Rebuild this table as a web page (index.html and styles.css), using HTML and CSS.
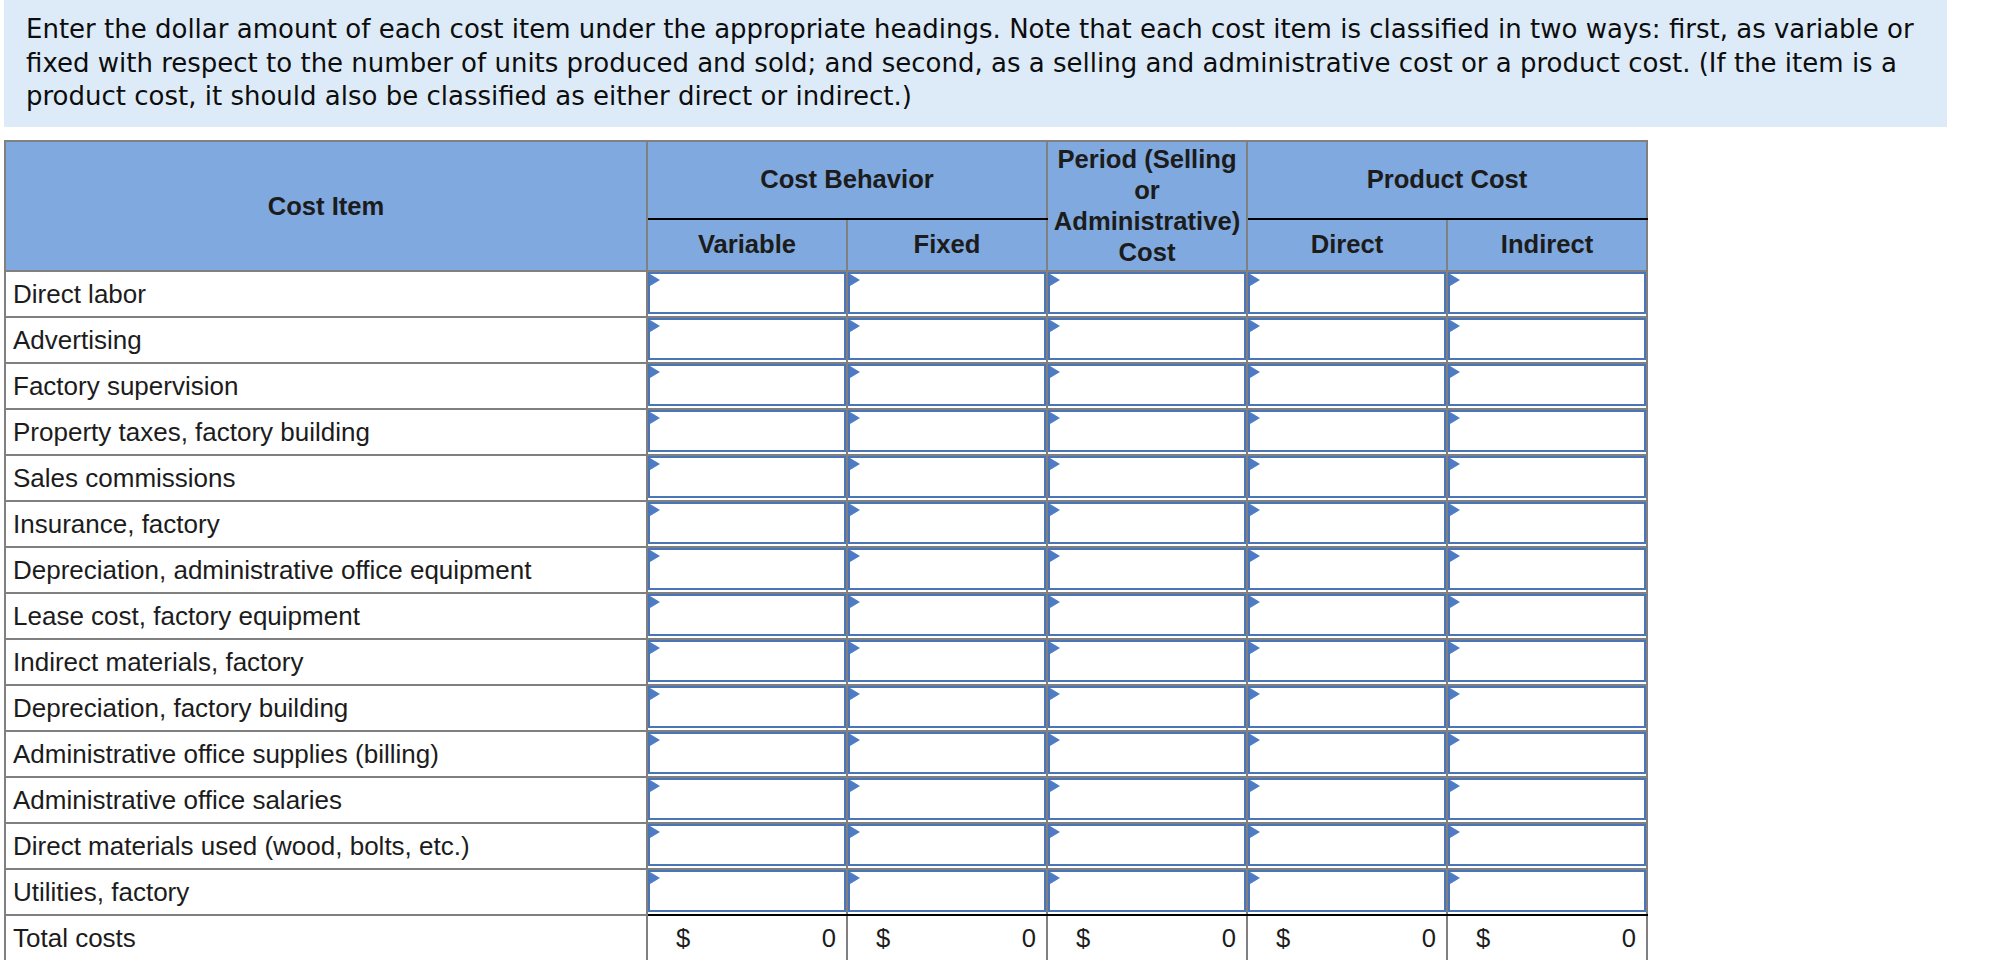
FILE: index.html
```html
<!DOCTYPE html>
<html lang="en">
<head>
<meta charset="utf-8">
<title>Cost classification</title>
<link rel="stylesheet" href="styles.css">
</head>
<body>
<div class="page">
  <div class="prompt">
    <p>Enter the dollar amount of each cost item under the appropriate headings. Note that each cost item is classified in two ways: first, as variable or fixed with respect to the number of units produced and sold; and second, as a selling and administrative cost or a product cost. (If the item is a product cost, it should also be classified as either direct or indirect.)</p>
  </div>

  <table class="grid">
    <colgroup>
      <col class="c-item">
      <col class="c-val"><col class="c-val"><col class="c-val"><col class="c-val"><col class="c-val">
    </colgroup>
    <thead>
      <tr class="h1">
        <th rowspan="2" class="item-h">Cost Item</th>
        <th colspan="2" class="group">Cost Behavior</th>
        <th rowspan="2" class="period">Period (Selling or Administrative) Cost</th>
        <th colspan="2" class="group">Product Cost</th>
      </tr>
      <tr class="h2">
        <th class="sub">Variable</th>
        <th class="sub">Fixed</th>
        <th class="sub">Direct</th>
        <th class="sub">Indirect</th>
      </tr>
    </thead>
    <tbody>
      <tr><td class="label">Direct labor</td><td class="cell"><div class="field"><input type="text"></div></td><td class="cell"><div class="field"><input type="text"></div></td><td class="cell"><div class="field"><input type="text"></div></td><td class="cell"><div class="field"><input type="text"></div></td><td class="cell"><div class="field"><input type="text"></div></td></tr>
      <tr><td class="label">Advertising</td><td class="cell"><div class="field"><input type="text"></div></td><td class="cell"><div class="field"><input type="text"></div></td><td class="cell"><div class="field"><input type="text"></div></td><td class="cell"><div class="field"><input type="text"></div></td><td class="cell"><div class="field"><input type="text"></div></td></tr>
      <tr><td class="label">Factory supervision</td><td class="cell"><div class="field"><input type="text"></div></td><td class="cell"><div class="field"><input type="text"></div></td><td class="cell"><div class="field"><input type="text"></div></td><td class="cell"><div class="field"><input type="text"></div></td><td class="cell"><div class="field"><input type="text"></div></td></tr>
      <tr><td class="label">Property taxes, factory building</td><td class="cell"><div class="field"><input type="text"></div></td><td class="cell"><div class="field"><input type="text"></div></td><td class="cell"><div class="field"><input type="text"></div></td><td class="cell"><div class="field"><input type="text"></div></td><td class="cell"><div class="field"><input type="text"></div></td></tr>
      <tr><td class="label">Sales commissions</td><td class="cell"><div class="field"><input type="text"></div></td><td class="cell"><div class="field"><input type="text"></div></td><td class="cell"><div class="field"><input type="text"></div></td><td class="cell"><div class="field"><input type="text"></div></td><td class="cell"><div class="field"><input type="text"></div></td></tr>
      <tr><td class="label">Insurance, factory</td><td class="cell"><div class="field"><input type="text"></div></td><td class="cell"><div class="field"><input type="text"></div></td><td class="cell"><div class="field"><input type="text"></div></td><td class="cell"><div class="field"><input type="text"></div></td><td class="cell"><div class="field"><input type="text"></div></td></tr>
      <tr><td class="label">Depreciation, administrative office equipment</td><td class="cell"><div class="field"><input type="text"></div></td><td class="cell"><div class="field"><input type="text"></div></td><td class="cell"><div class="field"><input type="text"></div></td><td class="cell"><div class="field"><input type="text"></div></td><td class="cell"><div class="field"><input type="text"></div></td></tr>
      <tr><td class="label">Lease cost, factory equipment</td><td class="cell"><div class="field"><input type="text"></div></td><td class="cell"><div class="field"><input type="text"></div></td><td class="cell"><div class="field"><input type="text"></div></td><td class="cell"><div class="field"><input type="text"></div></td><td class="cell"><div class="field"><input type="text"></div></td></tr>
      <tr><td class="label">Indirect materials, factory</td><td class="cell"><div class="field"><input type="text"></div></td><td class="cell"><div class="field"><input type="text"></div></td><td class="cell"><div class="field"><input type="text"></div></td><td class="cell"><div class="field"><input type="text"></div></td><td class="cell"><div class="field"><input type="text"></div></td></tr>
      <tr><td class="label">Depreciation, factory building</td><td class="cell"><div class="field"><input type="text"></div></td><td class="cell"><div class="field"><input type="text"></div></td><td class="cell"><div class="field"><input type="text"></div></td><td class="cell"><div class="field"><input type="text"></div></td><td class="cell"><div class="field"><input type="text"></div></td></tr>
      <tr><td class="label">Administrative office supplies (billing)</td><td class="cell"><div class="field"><input type="text"></div></td><td class="cell"><div class="field"><input type="text"></div></td><td class="cell"><div class="field"><input type="text"></div></td><td class="cell"><div class="field"><input type="text"></div></td><td class="cell"><div class="field"><input type="text"></div></td></tr>
      <tr><td class="label">Administrative office salaries</td><td class="cell"><div class="field"><input type="text"></div></td><td class="cell"><div class="field"><input type="text"></div></td><td class="cell"><div class="field"><input type="text"></div></td><td class="cell"><div class="field"><input type="text"></div></td><td class="cell"><div class="field"><input type="text"></div></td></tr>
      <tr><td class="label">Direct materials used (wood, bolts, etc.)</td><td class="cell"><div class="field"><input type="text"></div></td><td class="cell"><div class="field"><input type="text"></div></td><td class="cell"><div class="field"><input type="text"></div></td><td class="cell"><div class="field"><input type="text"></div></td><td class="cell"><div class="field"><input type="text"></div></td></tr>
      <tr class="last"><td class="label">Utilities, factory</td><td class="cell"><div class="field"><input type="text"></div></td><td class="cell"><div class="field"><input type="text"></div></td><td class="cell"><div class="field"><input type="text"></div></td><td class="cell"><div class="field"><input type="text"></div></td><td class="cell"><div class="field"><input type="text"></div></td></tr>
      <tr class="total">
        <td class="label">Total costs</td>
        <td class="sum"><div class="amt"><span>$</span><span>0</span></div></td>
        <td class="sum"><div class="amt"><span>$</span><span>0</span></div></td>
        <td class="sum"><div class="amt"><span>$</span><span>0</span></div></td>
        <td class="sum"><div class="amt"><span>$</span><span>0</span></div></td>
        <td class="sum"><div class="amt"><span>$</span><span>0</span></div></td>
      </tr>
    </tbody>
  </table>
</div>
</body>
</html>
```

FILE: styles.css
```css
html, body {
  margin: 0;
  padding: 0;
  background: #ffffff;
}

.page {
  padding: 0 0 0 4px;
}

.prompt {
  width: 1943px;
  box-sizing: border-box;
  background: #ddebf8;
  padding: 13px 22px 13px 22px;
  font-family: Verdana, "DejaVu Sans", sans-serif;
  font-size: 26px;
  line-height: 33.6px;
  color: #0d0d0d;
}

.prompt p {
  margin: 0;
}

.grid {
  margin-top: 13px;
  border-collapse: collapse;
  table-layout: fixed;
  width: 1644px;
  font-family: Arial, "Liberation Sans", sans-serif;
  font-size: 25.6px;
  color: #1c1c1c;
}

.c-item { width: 642px; }
.c-val { width: 200px; }

.grid th,
.grid td {
  border: 2px solid #808080;
  padding: 0;
}

.grid th {
  background: #80a9df;
  font-weight: bold;
  text-align: center;
  vertical-align: middle;
  line-height: 31px;
}

.h1 th { height: 76px; }
.h2 th { height: 50px; }

.grid th.item-h {
  padding-top: 2px;
}

.grid th.group {
  border-bottom-color: #000000;
}

.grid th.sub {
  border-top-color: #000000;
}

.grid th.period {
  padding: 0 4px;
}

.grid td {
  height: 44px;
}

.grid td.label {
  padding: 0 7px;
  vertical-align: middle;
  line-height: 30px;
  font-size: 26px;
}

.grid td.cell {
  vertical-align: top;
}

.field {
  position: relative;
  height: 42px;
  box-sizing: border-box;
  border: 2px solid #4a76b8;
  background: #ffffff;
}

.field::before {
  content: "";
  position: absolute;
  left: 0;
  top: 0;
  width: 0;
  height: 0;
  border-left: 10px solid #4d7cc4;
  border-top: 6.5px solid transparent;
  border-bottom: 6.5px solid transparent;
}

.field input {
  display: block;
  width: 100%;
  height: 100%;
  box-sizing: border-box;
  border: 0;
  outline: none;
  background: transparent;
  font: inherit;
  padding: 0 8px;
  text-align: right;
}

.last td.cell {
  border-bottom-color: #000000;
}

.total td.sum {
  border-top-color: #000000;
  border-bottom-color: #000000;
  height: 40px;
  vertical-align: middle;
}

.amt {
  display: flex;
  justify-content: space-between;
  align-items: center;
  padding: 0 10px 0 28px;
  line-height: 30px;
}
```
